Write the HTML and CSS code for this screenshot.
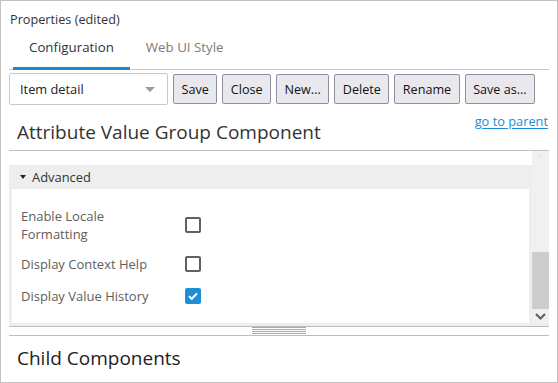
FILE: index.html
```html
<!DOCTYPE html>
<html lang="en">
<head>
  <meta charset="UTF-8" />
  <title>Properties (edited)</title>
  <link rel="stylesheet" href="styles.css">
</head>
<body>
  <div class="panel">
    <div class="panel-title">Properties (edited)</div>

    <!-- Tabs -->
    <div class="tabs">
      <div class="tab active">Configuration</div>
      <div class="tab">Web UI Style</div>
    </div>

    <!-- Toolbar -->
    <div class="toolbar">
      <div class="select">Item detail<span class="caret"></span></div>
      <button class="btn">Save</button>
      <button class="btn">Close</button>
      <button class="btn">New...</button>
      <button class="btn">Delete</button>
      <button class="btn">Rename</button>
      <button class="btn">Save as...</button>
    </div>

    <div class="comp-head">
      <a href="#" class="parent-link">go to parent</a>
      <h2>Attribute Value Group Component</h2>
    </div>

    <!-- Scroll area -->
    <div class="scroller">
      <div class="scroll-main">
        <div class="scroll-content">
          <div class="group">
            <div class="group-head"><span class="tri"></span>Advanced</div>
            <div class="group-body">
              <div class="row first">
                <div class="label">Enable Locale Formatting</div>
                <span class="check"></span>
              </div>
              <div class="row">
                <div class="label">Display Context Help</div>
                <span class="check"></span>
              </div>
              <div class="row">
                <div class="label">Display Value History</div>
                <span class="check checked">
                  <svg width="12" height="12" viewBox="0 0 12 12"><path d="M2 6.2 L4.8 8.8 L10 3.4" fill="none" stroke="#fff" stroke-width="2"/></svg>
                </span>
              </div>
            </div>
          </div>
        </div>
        <div class="scrollbar">
          <div class="sb-up"><span class="dot"></span></div>
          <div class="sb-thumb"></div>
          <div class="sb-down">
            <svg width="11" height="7" viewBox="0 0 11 7"><path d="M1 1 L5.5 5.5 L10 1" fill="none" stroke="#5f5f5f" stroke-width="2"/></svg>
          </div>
        </div>
      </div>
    </div>

    <div class="resizer"><div class="grip"></div></div>

    <h2 class="child-head">Child Components</h2>
  </div>
</body>
</html>
```

FILE: styles.css
```css
* { margin: 0; padding: 0; box-sizing: border-box; }
body { background: #fff; font-family: 'Open Sans', 'Noto Sans', sans-serif; color: #333; }

.panel {
  width: 558px; height: 383px; border: 1px solid #c2c2c2; overflow: hidden;
}
.panel-title { padding: 9px 9px 0; font-size: 12.7px; line-height: 18px; color: #333; height: 27px; }

.tabs {
  display: flex; margin: 0 8px; padding-left: 4px; border-bottom: 1px solid #c8c8c8;
}
.tab {
  padding: 9px 16px 10px; font-size: 13.3px; line-height: 20px; color: #7a7a7a;
  border-bottom: 3px solid transparent; margin-bottom: -1px;
}
.tab.active { color: #333; border-bottom-color: #1a88cc; }

.toolbar {
  display: flex; align-items: center; gap: 5px; margin: 3px 8px 0; height: 32px;
}
.select {
  position: relative; width: 159px; height: 32px; border: 1px solid #c8c8c8; border-radius: 2px;
  font-size: 12.8px; line-height: 30px; padding-left: 10px; color: #222;
}
.caret {
  position: absolute; right: 12px; top: 13px;
  border-left: 5px solid transparent; border-right: 5px solid transparent; border-top: 5px solid #9a9a9a;
}
.btn {
  height: 30px; padding: 0 7.5px; font-family: inherit; font-size: 12.6px; color: #111;
  background: #e9e9ed; border: 1px solid #8f8f9d; border-radius: 2px;
}

.comp-head {
  margin: 0 8px; padding: 14px 0 5px 8px; border-bottom: 1px solid #c2c2c2; height: 46px;
}
.comp-head h2 { font-size: 19px; font-weight: normal; line-height: 26px; color: #333; }
.parent-link {
  float: right; margin-top: -6px; margin-right: 1px;
  font-size: 12.8px; line-height: 16px; color: #1a8cd8; text-underline-offset: 2px;
}

.scroller {
  margin: 0 8px; height: 176px; background: #eee; border-bottom: 1px solid #bcbcbc;
}
.scroll-main { display: flex; height: 172px; }
.scroll-content { flex: 1; overflow: hidden; background: #fff; padding-top: 14px; }
.group { background: #eee; padding: 0 3px; height: 100%; }
.group-head {
  height: 24px; display: flex; align-items: center; padding-left: 8px;
  font-size: 12.9px; color: #333;
}
.tri {
  width: 0; height: 0; margin-right: 6px;
  border-left: 3.5px solid transparent; border-right: 3.5px solid transparent; border-top: 4px solid #222;
}
.group-body { background: #fff; height: 200px; padding: 11px 0 0 9px; }
.row { display: flex; align-items: center; padding: 7px 0; }
.row.first { padding-bottom: 5px; }
.label { width: 140px; margin-right: 24px; font-size: 13px; line-height: 18px; color: #5e5e5e; }
.check {
  width: 16px; height: 16px; border: 2px solid #616161; border-radius: 2px;
  display: flex; align-items: center; justify-content: center;
}
.check.checked { background: #1d8fd6; border-color: #1d8fd6; }

.scrollbar { width: 17px; background: #f0f0f0; display: flex; flex-direction: column; }
.sb-up { height: 101px; position: relative; }
.dot { position: absolute; left: 8px; top: 4px; width: 1px; height: 1px; background: #b8b8b8; }
.sb-thumb { height: 57px; background: #cdcdcd; }
.sb-down { flex: 1; display: flex; align-items: center; justify-content: center; }

.resizer { margin: 0 8px; height: 9px; border-bottom: 1px solid #bcbcbc; display: flex; justify-content: center; }
.grip {
  width: 54px; height: 7px;
  background: repeating-linear-gradient(#aaa 0 1px, transparent 1px 2px);
}

.child-head {
  padding: 9px 0 0 16px; font-size: 19px; font-weight: normal; line-height: 26px; color: #222;
}
```
